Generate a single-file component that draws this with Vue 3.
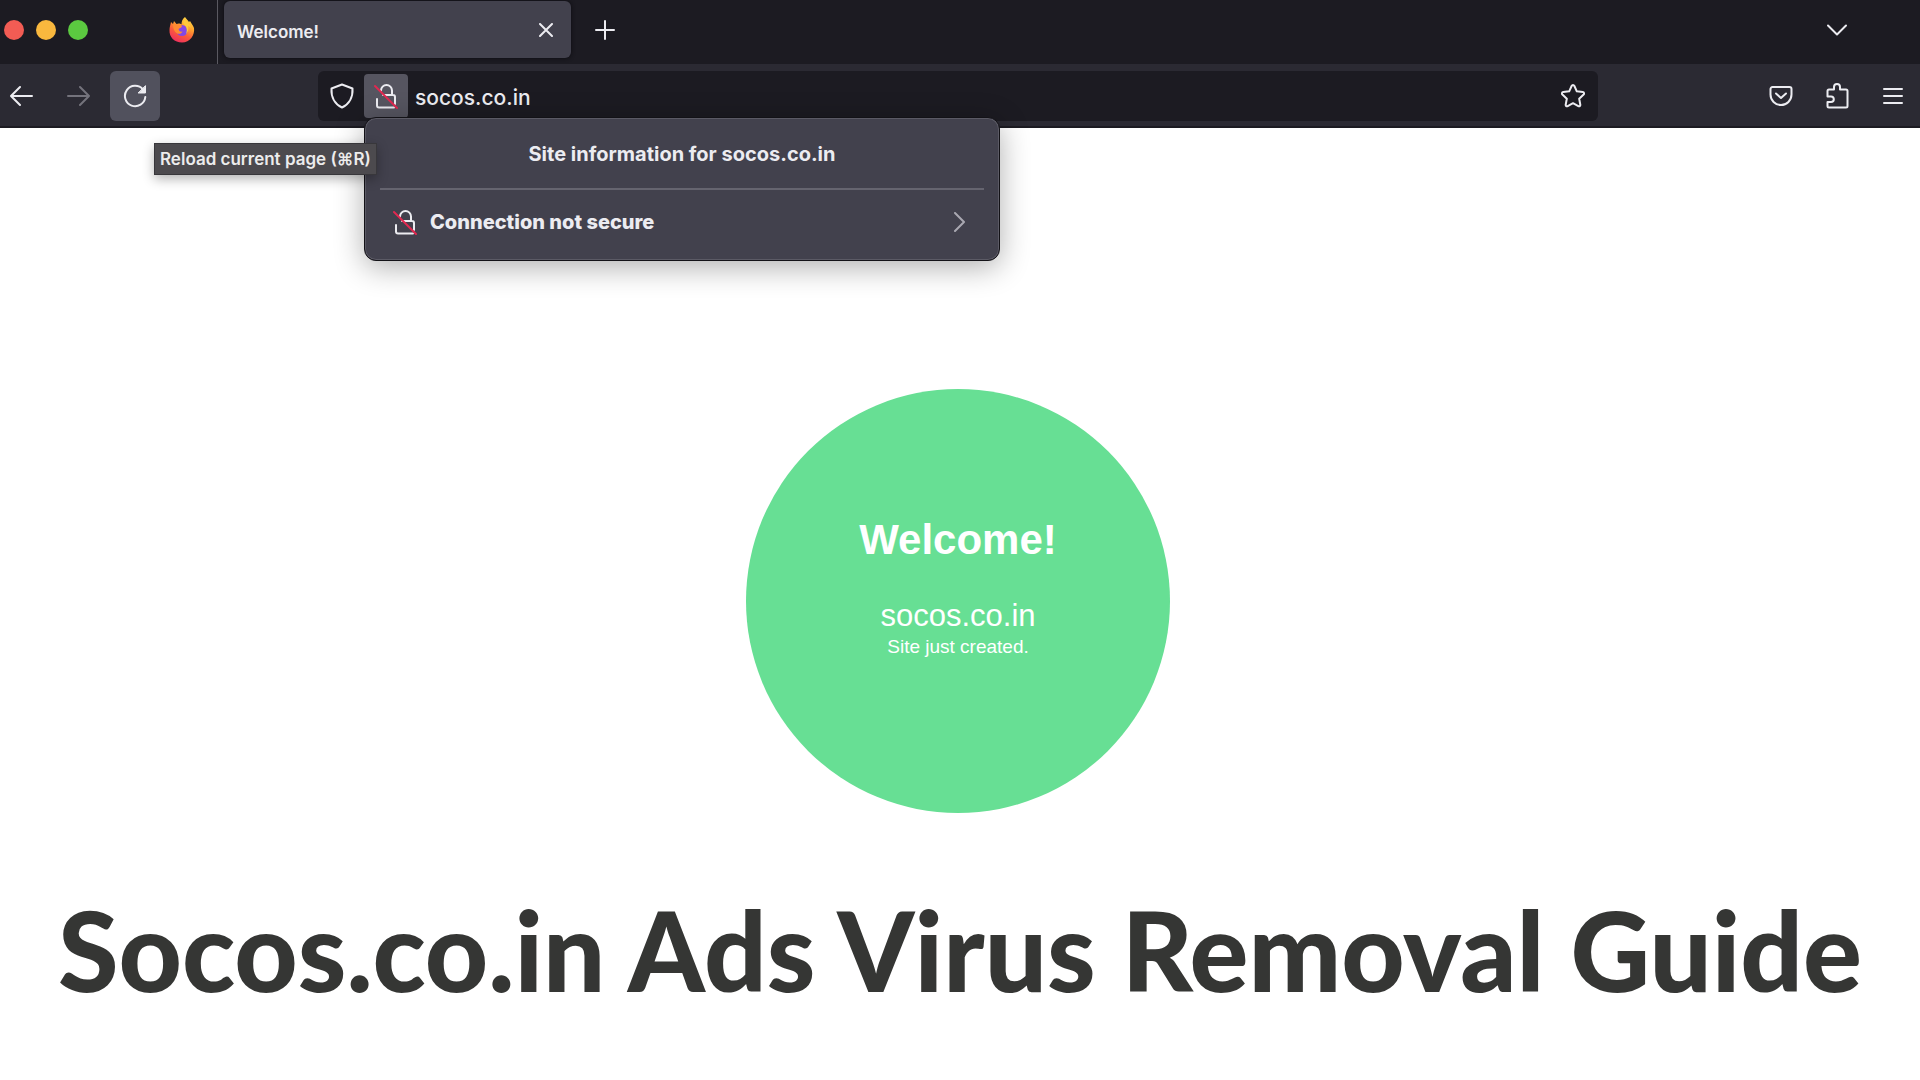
<script setup>
import { ref } from 'vue'

const address = ref('socos.co.in')
const lights = ['red', 'yellow', 'green']
</script>

<template>
  <div class="window">
    <header class="browser">
      <div class="tabs">
        <div class="lights">
          <span v-for="light in lights" :key="light" class="light" :class="light"></span>
        </div>
        <div class="pinned">
          <svg class="firefox" viewBox="0 0 26 26" aria-label="Firefox">
            <defs>
              <linearGradient id="flame" x1="0.8" y1="0" x2="0.3" y2="1">
                <stop offset="0" stop-color="#ffe14a" />
                <stop offset="0.35" stop-color="#ffa52e" />
                <stop offset="0.65" stop-color="#fb5a3c" />
                <stop offset="1" stop-color="#ee2d5f" />
              </linearGradient>
            </defs>
            <path fill="url(#flame)" d="M16 0c1 2 3 3 4 5l1-1c1 2 3 4 4 7 1 7-4 14.500-12 14.500C5.500 25.500 0 20 .5 13c0-3 1-5 1.500-8l2 2 1-3 2.500 3c2-1 4-.5 5 .5 0-3 1-6 3.500-7.500z" />
            <circle cx="13" cy="13.500" r="5.500" fill="#8447e6" />
            <path fill="#ff8a32" d="M4 7c3 0 5 0 8 1l1 1c0 1.500-2 2-3.500 3 .5 2 1.500 3 4 2.500-1 2.500-4 3-6 1.500C5 14.500 4 11 4 7z" />
            <path fill="#ffc83b" d="M16 2c2 3 5 5 6 9-1-1-2-2-3-2 1 3 0 6-2 8 2-5 0-8-2.500-10C14 5 15 3 16 2z" />
          </svg>
        </div>
        <div class="tab">
          <span>Welcome!</span>
          <button class="icon-button close" aria-label="Close tab">
            <svg class="small" viewBox="0 0 14 14"><path d="M1 1l12 12M13 1L1 13" /></svg>
          </button>
        </div>
        <button class="icon-button new-tab" aria-label="New tab">
          <svg class="medium" viewBox="0 0 20 20"><path d="M10 1v18M1 10h18" /></svg>
        </button>
        <button class="icon-button all-tabs" aria-label="List all tabs">
          <svg class="medium" viewBox="0 0 20 20"><path d="M1 5.500l9 9 9-9" /></svg>
        </button>
      </div>

      <nav class="toolbar">
        <button class="icon-button back" aria-label="Back">
          <svg viewBox="0 0 24 24"><path d="M22 12H1M10 3l-9 9 9 9" /></svg>
        </button>
        <button class="icon-button forward" aria-label="Forward" disabled>
          <svg viewBox="0 0 24 24"><path d="M2 12h21M14 3l9 9-9 9" /></svg>
        </button>
        <div class="reload-wrap">
          <button class="icon-button reload" aria-label="Reload" aria-describedby="reload-tip">
            <svg viewBox="0 0 24 24">
              <path d="M20 5.500A10.200 10.200 0 1 0 22.300 13" />
              <path class="solid" d="M22.500 2v7h-7z" />
            </svg>
          </button>
          <div id="reload-tip" class="tooltip" role="tooltip">Reload current page (⌘R)</div>
        </div>

        <div class="urlbar">
          <button class="icon-button shield" aria-label="Tracking protection">
            <svg viewBox="0 0 24 26"><path d="M12 1.500l10.500 4c.5 8-3 15.500-10.500 19C4.500 21 1 13.500 1.500 5.500z" /></svg>
          </button>
          <div class="identity-wrap">
            <button class="icon-button identity" aria-label="Site information" aria-expanded="true">
              <svg viewBox="0 0 24 26">
                <path d="M7 7.500a5.500 5.500 0 0 1 11 0V12M3 16v6.500a2 2 0 0 0 2 2h15M9 12h10a2 2 0 0 1 2 2v7" />
                <path class="slash" d="M1 3l22 22" />
              </svg>
            </button>
            <section class="popup" aria-labelledby="popup-title">
              <h2 id="popup-title">Site information for socos.co.in</h2>
              <hr />
              <button class="connection">
                <svg viewBox="0 0 24 26">
                  <path d="M7 7.500a5.500 5.500 0 0 1 11 0V12M3 16v6.500a2 2 0 0 0 2 2h15M9 12h10a2 2 0 0 1 2 2v7" />
                  <path class="slash" d="M1 3l22 22" />
                </svg>
                <span>Connection not secure</span>
                <svg class="next medium" viewBox="0 0 20 20"><path d="M6 1l9 9-9 9" /></svg>
              </button>
            </section>
          </div>
          <input v-model="address" type="text" aria-label="Address" spellcheck="false" />
          <button class="icon-button star" aria-label="Bookmark this page">
            <svg viewBox="0 0 24 24"><path d="M12 1c.7 0 1.100.4 1.400 1l2.400 5.300 6 .8c1.300.2 1.700 1.500.8 2.400l-4.400 4.200 1.100 6c.2 1.300-.9 2-2 1.400L12 19.200l-5.300 2.900c-1.100.6-2.200-.1-2-1.400l1.100-6-4.400-4.200c-.9-.9-.5-2.200.8-2.400l6-.8L10.600 2c.3-.6.7-1 1.400-1z" /></svg>
          </button>
        </div>

        <div class="actions">
          <button class="icon-button" aria-label="Save to Pocket">
            <svg viewBox="0 0 24 24"><path d="M3.500 3h17a2 2 0 0 1 2 2v5.500a10.500 10.500 0 0 1-21 0V5a2 2 0 0 1 2-2zM7 9.500l5 4.500 5-4.500" /></svg>
          </button>
          <button class="icon-button" aria-label="Extensions">
            <svg viewBox="0 0 24 26"><path d="M9 6.500V4a3 3 0 0 1 6 0v2.500h6a1.500 1.500 0 0 1 1.500 1.500v15a1.500 1.500 0 0 1-1.500 1.500H4A1.500 1.500 0 0 1 2.500 23v-4H6a2.800 2.800 0 0 0 0-5.600H2.500V8A1.500 1.500 0 0 1 4 6.500z" /></svg>
          </button>
          <button class="icon-button" aria-label="Open menu">
            <svg class="medium" viewBox="0 0 20 20"><path d="M1 3h18M1 10h18M1 17h18" /></svg>
          </button>
        </div>
      </nav>
    </header>

    <main class="page">
      <div class="circle">
        <h3>Welcome!</h3>
        <p class="domain">socos.co.in</p>
        <p class="note">Site just created.</p>
      </div>
      <h1>Socos.co.in Ads Virus Removal Guide</h1>
    </main>
  </div>
</template>

<style>
body {
  margin: 0;
  background: #fff;
}
</style>

<style scoped>
.window {
  min-height: 100vh;
  overflow-x: hidden;
  font-family: Inter, "Liberation Sans", sans-serif;
}

button {
  margin: 0;
  padding: 0;
  border: 0;
  background: none;
  color: inherit;
  font: inherit;
}

svg {
  display: block;
  width: 24px;
  height: 26px;
  flex: none;
  fill: none;
  stroke: currentColor;
  stroke-width: 2;
  stroke-linecap: round;
  stroke-linejoin: round;
}

svg.small {
  width: 14px;
  height: 14px;
}

svg.medium {
  width: 20px;
  height: 20px;
}

.solid {
  fill: currentColor;
  stroke-width: 1;
}

.slash {
  stroke: #e22850;
}

.icon-button {
  display: flex;
  flex: none;
  align-items: center;
  justify-content: center;
  width: 44px;
  height: 44px;
}

.browser {
  color: #ececf1;
}

.tabs {
  display: flex;
  height: 64px;
  background: #1c1b22;
}

.lights {
  display: flex;
  align-items: center;
  gap: 12px;
  padding: 0 0 4px 4px;
}

.light {
  width: 20px;
  height: 20px;
  border-radius: 50%;
}

.red {
  background: #f25c54;
}

.yellow {
  background: #f9b83e;
}

.green {
  background: #5bc940;
}

.pinned {
  display: flex;
  align-items: center;
  width: 48px;
  margin-left: 81px;
  padding-bottom: 4px;
  border-right: 1px solid #5a5961;
}

.firefox {
  width: 26px;
  height: 26px;
  stroke: none;
}

.tab {
  display: flex;
  align-items: center;
  justify-content: space-between;
  box-sizing: border-box;
  width: 347px;
  height: 57px;
  margin: 1px 0 0 6px;
  padding: 4px 3px 0 13px;
  border-radius: 6px;
  background: #42414d;
  box-shadow: 0 0 4px #0c0b10;
  font-size: 17px;
  font-weight: 600;
}

.close {
  margin-bottom: 4px;
}

.new-tab,
.all-tabs {
  margin-top: 8px;
}

.new-tab {
  margin-left: 12px;
}

.all-tabs {
  margin-left: auto;
  margin-right: 61px;
}

.toolbar {
  display: flex;
  align-items: center;
  box-sizing: border-box;
  height: 64px;
  padding-top: 2px;
  border-bottom: 2px solid #1c1b22;
  background: #2b2a33;
}

.forward {
  margin-left: 12px;
  color: #74737c;
}

.reload-wrap {
  position: relative;
  margin-left: 10px;
}

.reload {
  width: 50px;
  height: 50px;
  border-radius: 6px;
  background: #51515d;
}

.tooltip {
  position: absolute;
  z-index: 3;
  top: 72px;
  left: 44px;
  padding: 0 5px;
  border: 1px solid #38373b;
  background: #4c4a4e;
  box-shadow: 0 4px 12px rgb(0 0 0 / 30%);
  color: #ececec;
  font-size: 17px;
  font-weight: 600;
  line-height: 30px;
  white-space: nowrap;
}

.urlbar {
  display: flex;
  flex: 1;
  align-items: center;
  height: 50px;
  margin-left: 158px;
  border-radius: 6px;
  background: #1c1b22;
}

.shield {
  width: 46px;
  padding-left: 2px;
}

.identity-wrap {
  position: relative;
}

.identity {
  border-radius: 4px;
  background: #565560;
}

.popup {
  position: absolute;
  z-index: 2;
  top: 43px;
  left: 0;
  box-sizing: border-box;
  width: 636px;
  padding: 3px 15px 14px;
  border: 1px solid #131217;
  border-radius: 12px;
  background: #42414d;
  box-shadow: inset 0 0 0 1px #5b5a65, 0 6px 30px rgb(0 0 0 / 32%);
}

.popup h2 {
  margin: 0;
  font-size: 20px;
  font-weight: 700;
  line-height: 67px;
  text-align: center;
}

.popup hr {
  height: 2px;
  margin: 0;
  border: 0;
  background: #65646f;
}

.connection {
  display: flex;
  align-items: center;
  width: 100%;
  height: 56px;
  padding: 8px 15px 0 13px;
  font-size: 20px;
  font-weight: 800;
}

.connection span {
  margin-left: 13px;
}

.next {
  margin-left: auto;
  color: #a9a8b1;
}

input {
  flex: 1;
  min-width: 0;
  padding: 2px 7px 0;
  border: 0;
  outline: 0;
  background: none;
  color: #ececf1;
  font: 500 21px Inter, "Liberation Sans", sans-serif;
}

.star {
  width: 50px;
}

.actions {
  display: flex;
  gap: 12px;
  margin: 0 5px 0 161px;
}

.page {
  display: flex;
  flex-direction: column;
  align-items: center;
  padding: 261px 0 64px;
}

.circle {
  display: flex;
  flex-direction: column;
  align-items: center;
  box-sizing: border-box;
  width: 424px;
  height: 424px;
  margin-right: 4px;
  padding-top: 126px;
  border-radius: 50%;
  background: #67df94;
  color: #fff;
  font-family: "Liberation Sans", Arial, sans-serif;
}

.circle h3 {
  margin: 0 0 33px;
  font-size: 42px;
  line-height: 50px;
}

.circle p {
  margin: 0;
}

.domain {
  font-size: 31px;
  line-height: 36px;
}

.note {
  font-size: 19px;
  line-height: 26px;
}

h1 {
  margin: 66px 0 0;
  color: #353634;
  font-family: Lato, "Liberation Sans", sans-serif;
  font-size: 110px;
  font-weight: 900;
  line-height: 140px;
  white-space: nowrap;
}
</style>
